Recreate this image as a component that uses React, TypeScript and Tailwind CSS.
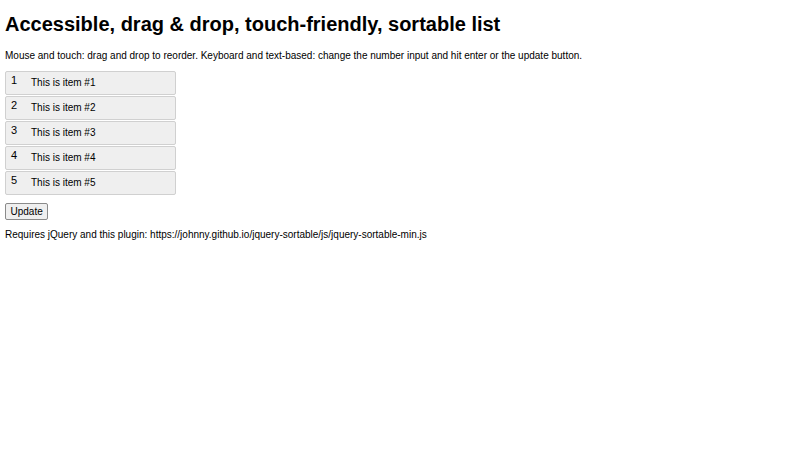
import { useState } from 'react';

const initialItems = [1, 2, 3, 4, 5].map(n => ({ id: n, label: `This is item #${n}` }));

export default function App() {
  const [items] = useState(initialItems);

  return (
    <div className="min-h-[450px] bg-white px-[5px] text-black font-['Liberation_Sans',Arial,sans-serif]">
      <h1 className="pt-[13px] text-[20px] font-bold leading-[23px]">
        Accessible, drag &amp; drop, touch-friendly, sortable list
      </h1>
      <p className="mt-[14px] text-[10px] leading-[12px]">
        Mouse and touch: drag and drop to reorder. Keyboard and text-based: change the number input and hit enter or the update button.
      </p>
      <ul className="mt-[9px] flex flex-col gap-[1px]">
        {items.map((item, i) => (
          <li
            key={item.id}
            className="flex h-[24px] w-[171px] items-start rounded-[2px] border border-[#d0d0d0] bg-[#efefef] text-[10px] leading-[12px]"
          >
            <span className="w-[25px] pl-[5px] pt-[2px] text-[11px]">{i + 1}</span>
            <span className="pt-[5px]">{item.label}</span>
          </li>
        ))}
      </ul>
      <button className="mt-[8px] h-[17px] rounded-[2px] border border-[#8a8a8a] bg-[#efefef] px-[4.5px] text-[10px] leading-[12px]">
        Update
      </button>
      <p className="mt-[7px] text-[10px] leading-[12px]">
        Requires jQuery and this plugin: https://johnny.github.io/jquery-sortable/js/jquery-sortable-min.js
      </p>
    </div>
  );
}
